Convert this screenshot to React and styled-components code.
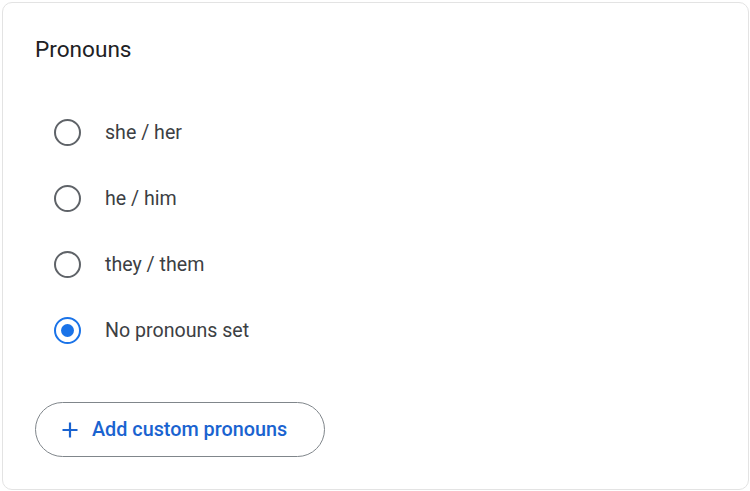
import React, { useState } from "react";
import styled, { createGlobalStyle } from "styled-components";

const options = ["she / her", "he / him", "they / them", "No pronouns set"];

const App = () => {
    const [selected, setSelected] = useState("No pronouns set");

    return (
        <>
            <GlobalStyle />
            <Card>
                <Title>Pronouns</Title>

                <List>
                    {options.map(option => (
                        <Row key={option} onClick={() => setSelected(option)}>
                            <Radio checked={selected === option} />
                            <Label>{option}</Label>
                        </Row>
                    ))}
                </List>

                <AddButton>
                    <svg width="18" height="18" viewBox="0 0 18 18">
                        <path d="M9 1.5v15M1.5 9h15" stroke="currentColor" strokeWidth="2.2" fill="none" />
                    </svg>
                    Add custom pronouns
                </AddButton>
            </Card>
        </>
    );
};

const GlobalStyle = createGlobalStyle`
body{
margin:0;
background:#fff;
font-family:Roboto, "Liberation Sans", sans-serif;
}
`;

const Card = styled.div`
box-sizing:border-box;
margin:2px 0 0 2px;
width:747px;
height:488px;
border:1px solid #e3e3e3;
border-radius:10px;
padding:33px 0 0 32px;
display:flex;
flex-direction:column;
align-items:flex-start;
`;

const Title = styled.h2`
margin:0;
font-size:22.6px;
line-height:28px;
font-weight:400;
color:#202124;
`;

const List = styled.div`
margin-top:35px;
display:flex;
flex-direction:column;
`;

const Row = styled.label`
height:66px;
display:flex;
align-items:center;
gap:24px;
padding-left:19px;
cursor:pointer;
`;

const Radio = styled.span`
box-sizing:border-box;
width:27px;
height:27px;
border-radius:50%;
border:2.6px solid ${props => (props.checked ? "#1a73e8" : "#5f6368")};
display:flex;
align-items:center;
justify-content:center;

&::after{
content:"";
width:13px;
height:13px;
border-radius:50%;
background:#1a73e8;
display:${props => (props.checked ? "block" : "none")};
}
`;

const Label = styled.span`
font-size:19.6px;
color:#3c4043;
`;

const AddButton = styled.button`
margin-top:39px;
box-sizing:border-box;
width:290px;
height:55px;
border:1px solid #80868b;
border-radius:28px;
background:#fff;
color:#1a63d0;
font-family:Roboto, "Liberation Sans", sans-serif;
font-size:19.8px;
font-weight:500;
display:flex;
align-items:center;
gap:13px;
padding:0 0 0 25px;
cursor:pointer;

svg{
flex-shrink:0;
}
`;

export default App;
